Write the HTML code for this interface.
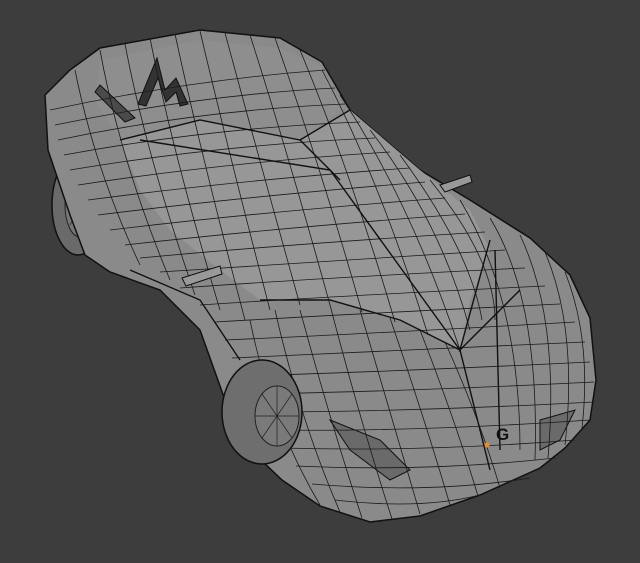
<!DOCTYPE html>
<html><head><meta charset="utf-8"><style>
html,body{margin:0;padding:0;background:#3d3d3d;width:640px;height:563px;overflow:hidden}
</style></head><body>
<svg width="640" height="563" viewBox="0 0 640 563" xmlns="http://www.w3.org/2000/svg">
<rect width="640" height="563" fill="#3d3d3d"/>
<ellipse cx="78" cy="205" rx="26" ry="50" fill="#6a6a6a" stroke="#111" stroke-width="1.5"/>
<ellipse cx="80" cy="205" rx="15" ry="32" fill="#777" stroke="#222"/>
<g fill="none" stroke="#222" stroke-width="0.7"><path d="M80,173 L80,237 M66,205 L95,205 M70,185 L90,225 M70,225 L90,185"/></g>
<path d="M45,95 L70,70 L100,48 L200,30 L280,38 L322,62 L350,110 L420,170 L470,200 L530,238 L570,275 L590,318 L596,380 L590,420 L565,448 L540,468 L480,495 L420,516 L370,522 L320,506 L282,480 L240,440 L225,400 L200,330 L160,290 L110,272 L85,255 L70,215 L48,150 Z" fill="#8a8a8a" stroke="#111" stroke-width="1.5"/>
<path d="M120,140 L200,120 L300,140 L350,110 L420,170 L470,210 L490,250 L470,300 L460,350 L400,320 L330,300 L260,300 L220,270 L170,230 L140,190 Z" fill="#979797"/>
<path d="M100,60 L200,40 L280,48 L320,65 L345,108 L300,140 L200,120 L120,140 L95,100 Z" fill="#8e8e8e"/>
<path d="M100,85 L135,118 L125,122 L95,92 Z" fill="#4a4a4a" stroke="#111"/>
<path d="M138,104 L157,58 L165,90 L176,78 L188,104 L180,106 L176,92 L166,102 L158,78 L146,106 Z" fill="#333" stroke="#111"/>
<path d="M330,420 L380,440 L410,470 L390,480 L350,450 Z" fill="#6a6a6a" stroke="#111"/>
<path d="M540,420 L575,410 L560,440 L540,450 Z" fill="#6a6a6a" stroke="#111"/>
<g fill="none" stroke="#1a1a1a" stroke-width="0.8">
<path d="M50,110 Q190,80 325,70"/><path d="M55,125 Q200,95 335,88"/><path d="M58,140 Q200,110 345,104"/>
<path d="M64,155 Q210,128 360,122"/><path d="M70,170 Q220,145 375,138"/><path d="M78,185 Q230,162 390,152"/>
<path d="M88,200 Q240,180 410,168"/><path d="M98,215 Q250,196 425,182"/><path d="M110,230 Q260,212 445,198"/>
<path d="M125,245 Q275,228 465,214"/><path d="M140,258 Q290,244 485,232"/><path d="M160,272 Q305,262 505,250"/>
<path d="M180,288 Q320,278 525,268"/><path d="M200,305 Q335,296 545,286"/><path d="M215,322 Q350,314 560,304"/>
<path d="M225,340 Q365,334 575,322"/><path d="M232,358 Q375,352 585,342"/><path d="M238,376 Q385,372 590,362"/>
<path d="M245,394 Q395,392 594,382"/><path d="M255,412 Q405,412 594,402"/><path d="M268,430 Q415,432 590,420"/>
<path d="M282,448 Q425,452 575,440"/><path d="M296,466 Q430,472 555,458"/><path d="M312,484 Q430,494 530,478"/>
<path d="M335,500 Q420,510 480,495"/>
<path d="M75,70 Q95,170 140,265"/><path d="M100,50 Q120,160 170,280"/><path d="M125,44 Q145,150 195,295"/>
<path d="M150,38 Q172,150 220,310"/><path d="M175,34 Q200,150 245,320"/><path d="M200,31 Q228,150 270,310"/>
<path d="M225,33 Q258,155 300,305"/><path d="M250,35 Q290,160 330,305"/><path d="M275,38 Q320,165 362,312"/>
<path d="M300,50 Q350,170 395,322"/><path d="M322,70 Q380,180 428,335"/><path d="M340,95 Q410,200 460,350"/>
<path d="M370,130 Q440,220 470,330"/><path d="M400,155 Q470,250 482,320"/><path d="M430,180 Q495,260 495,320"/>
<path d="M460,200 Q520,300 520,450"/><path d="M490,218 Q540,300 535,460"/><path d="M520,235 Q560,320 548,458"/>
<path d="M545,252 Q578,330 565,445"/><path d="M565,272 Q592,340 582,428"/>
<path d="M250,320 Q270,420 320,505"/><path d="M275,310 Q300,420 340,512"/><path d="M300,310 Q330,420 362,518"/>
<path d="M330,305 Q360,420 392,519"/><path d="M360,310 Q392,420 420,514"/><path d="M390,318 Q425,420 450,505"/>
<path d="M420,330 Q455,420 478,496"/><path d="M445,342 Q480,420 500,488"/>
</g>
<g fill="none" stroke="#111" stroke-width="1.4">
<path d="M120,140 L200,120 L300,140 L350,110"/>
<path d="M140,140 L330,170 L460,350"/><path d="M300,140 L340,180"/>
<path d="M490,240 L460,350 L520,290"/><path d="M460,350 L490,470"/><path d="M495,250 L500,450"/>
<path d="M260,300 L330,300 L400,320 L460,350"/>
<path d="M130,270 L200,300 L240,360"/>
</g>
<ellipse cx="262" cy="412" rx="40" ry="52" fill="#6e6e6e" stroke="#111" stroke-width="1.5"/>
<ellipse cx="277" cy="416" rx="22" ry="30" fill="#7a7a7a" stroke="#222"/>
<g fill="none" stroke="#222" stroke-width="0.7"><path d="M277,386 L277,446 M255,416 L299,416 M262,394 L292,438 M262,438 L292,394"/></g>
<path d="M440,185 L470,175 L472,182 L445,192 Z" fill="#999" stroke="#111"/>
<path d="M182,278 L220,266 L222,274 L186,286 Z" fill="#999" stroke="#111"/>
<text x="496" y="440" font-family="Liberation Sans, sans-serif" font-size="17" font-weight="bold" fill="#111">G</text>
<circle cx="487" cy="445" r="2.5" fill="#f08a1c"/>
</svg>
</body></html>
